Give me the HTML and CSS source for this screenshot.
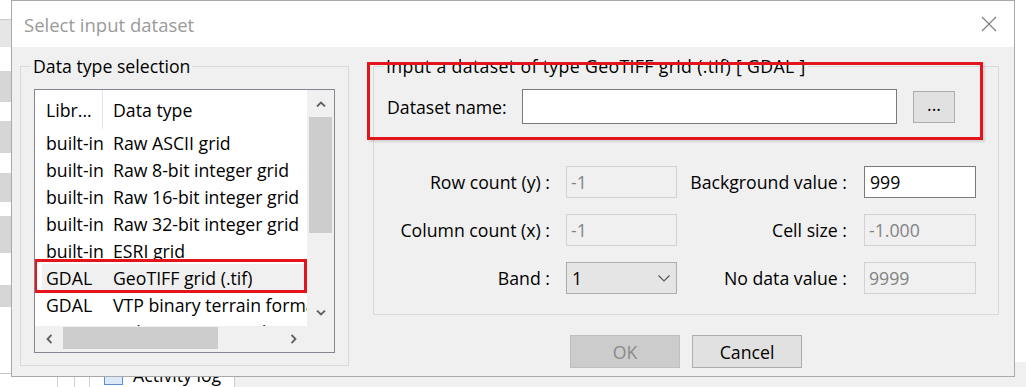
FILE: index.html
```html
<!DOCTYPE html>
<html>
<head>
<meta charset="utf-8">
<title>Select input dataset</title>
<link rel="stylesheet" href="styles.css">
</head>
<body>
<div class="desktop">
  <div class="app">
    <div class="stripes">
      <div class="st w h19"></div>
      <div class="st ln h1"></div>
      <div class="st lg h27"></div>
      <div class="st w h24"></div>
      <div class="st g h31"></div>
      <div class="st w h19"></div>
      <div class="st g h32"></div>
      <div class="st w h20"></div>
      <div class="st g h29"></div>
      <div class="st w h14"></div>
      <div class="st g h37"></div>
      <div class="st w h32"></div>
      <div class="st g h22"></div>
      <div class="st w h66"></div>
      <div class="st ln h1"></div>
      <div class="st w h13"></div>
    </div>
    <div class="app-main"></div>
    <div class="tabbar">
      <div class="tb tb-a"></div>
      <div class="tb tb-b"></div>
      <div class="tb tb-c"></div>
      <div class="tab">
        <svg class="tab-icon" width="19" height="13" viewBox="0 0 19 13"><rect x="0.5" y="0.5" width="18" height="12" fill="#dbe8f7" stroke="#5b8fd0"/><line x1="3" y1="4" x2="16" y2="4" stroke="#5b8fd0"/></svg>
        <span>Activity log</span>
      </div>
      <div class="tb-rest"></div>
    </div>
  </div>

  <div class="dialog">
    <div class="titlebar">
      <span class="title">Select input dataset</span>
      <svg class="close" width="16" height="16" viewBox="0 0 16 16"><path d="M1 1 L15 15 M15 1 L1 15" stroke="#7b7b7b" stroke-width="1.1" fill="none"/></svg>
    </div>
    <div class="dlg-body">
      <fieldset class="group left-group">
        <legend>Data type selection</legend>
        <div class="listbox">
          <div class="list-view">
            <div class="list-head"><div class="c1">Libr...</div><div class="c2">Data type</div></div>
            <div class="row"><div class="c1">built-in</div><div class="c2">Raw ASCII grid</div></div>
            <div class="row"><div class="c1">built-in</div><div class="c2">Raw 8-bit integer grid</div></div>
            <div class="row"><div class="c1">built-in</div><div class="c2">Raw 16-bit integer grid</div></div>
            <div class="row"><div class="c1">built-in</div><div class="c2">Raw 32-bit integer grid</div></div>
            <div class="row"><div class="c1">built-in</div><div class="c2">ESRI grid</div></div>
            <div class="row selected"><div class="c1">GDAL</div><div class="c2">GeoTIFF grid (.tif)</div></div>
            <div class="row"><div class="c1">GDAL</div><div class="c2">VTP binary terrain format</div></div>
            <div class="row"><div class="c1"></div><div class="c2">Erdas Imagine grid (.img)</div></div>
          </div>
          <div class="vscroll">
            <div class="arrow"><svg width="10" height="6" viewBox="0 0 10 6"><polyline points="1,5.5 5,1.5 9,5.5" fill="none" stroke="#606060" stroke-width="1.8"/></svg></div>
            <div class="vthumb"></div>
            <div class="spacer"></div>
            <div class="arrow"><svg width="10" height="6" viewBox="0 0 10 6"><polyline points="1,0.5 5,4.5 9,0.5" fill="none" stroke="#606060" stroke-width="1.8"/></svg></div>
          </div>
          <div class="hscroll">
            <div class="harrow"><svg width="6" height="10" viewBox="0 0 6 10"><polyline points="5.5,1 1.5,5 5.5,9" fill="none" stroke="#606060" stroke-width="1.8"/></svg></div>
            <div class="hthumb"></div>
            <div class="spacer"></div>
            <div class="harrow"><svg width="6" height="10" viewBox="0 0 6 10"><polyline points="0.5,1 4.5,5 0.5,9" fill="none" stroke="#606060" stroke-width="1.8"/></svg></div>
          </div>
          <div class="corner"></div>
        </div>
      </fieldset>

      <div class="right-col">
        <fieldset class="group right-group">
          <legend>Input a dataset of type GeoTIFF grid (.tif) [ GDAL ]</legend>
          <div class="dataset-row">
            <label class="lbl-left">Dataset name:</label>
            <div class="tbox wide"></div>
            <button class="browse">...</button>
          </div>
          <div class="fields">
            <label class="lbl">Row count (y) :</label>
            <div class="tbox disabled">-1</div>
            <label class="lbl lbl2">Background value :</label>
            <div class="tbox">999</div>

            <label class="lbl">Column count (x) :</label>
            <div class="tbox disabled">-1</div>
            <label class="lbl lbl2">Cell size :</label>
            <div class="tbox disabled">-1.000</div>

            <label class="lbl">Band :</label>
            <div class="combo"><span>1</span><svg width="12" height="7" viewBox="0 0 12 7"><polyline points="0.5,0.5 6,6 11.5,0.5" fill="none" stroke="#555" stroke-width="1.1"/></svg></div>
            <label class="lbl lbl2">No data value :</label>
            <div class="tbox disabled">9999</div>
          </div>
        </fieldset>
        <div class="buttons">
          <button class="btn btn-disabled">OK</button>
          <button class="btn">Cancel</button>
        </div>
      </div>

      <div class="mark mark-dataset"></div>
    </div>
  </div>
</div>
</body>
</html>
```

FILE: styles.css
```css
* { box-sizing: border-box; }
html, body { margin: 0; padding: 0; }
body {
  width: 1026px;
  height: 387px;
  overflow: hidden;
  background: #ffffff;
  font-family: "Open Sans", "Noto Sans", sans-serif;
  font-size: 17.7px;
  color: #000;
}

.desktop { position: relative; width: 1026px; height: 387px; }

/* background application */
.app {
  display: grid;
  grid-template-columns: 11px 1fr;
  grid-template-rows: 1fr 25px;
  height: 100%;
}
.stripes { grid-row: 1 / 3; display: flex; flex-direction: column; }
.st.w { background: #ffffff; }
.st.g { background: #d6d6d6; }
.st.lg { background: #e6e6e6; }
.st.ln { background: #c8c8c8; }
.h1 { height: 1px; } .h13 { height: 13px; } .h14 { height: 14px; } .h19 { height: 19px; }
.h20 { height: 20px; } .h22 { height: 22px; } .h24 { height: 24px; } .h27 { height: 27px; }
.h29 { height: 29px; } .h31 { height: 31px; } .h32 { height: 32px; } .h37 { height: 37px; }
.h66 { height: 66px; }
.app-main { background: #fff; }
.tabbar { display: flex; background: #fff; }
.tb { border-right: 1px solid #cfcfcf; background: #fff; }
.tb-a { width: 47px; }
.tb-b { width: 17px; }
.tb-c { width: 15px; }
.tab {
  width: 145px;
  border-right: 1px solid #cfcfcf;
  display: flex;
  align-items: flex-start;
  gap: 10px;
  padding: 3px 0 0 14px;
  line-height: 20px;
}
.tab-icon { margin-top: 7px; }
.tb-rest { flex: 1; background: #f0f0f0; }

/* dialog window */
.dialog {
  position: absolute;
  left: 11px;
  top: 0;
  width: 1004px;
  height: 377px;
  border: 1px solid #a9a9a9;
  background: #f0f0f0;
  display: flex;
  flex-direction: column;
}
.titlebar {
  height: 46px;
  background: #ffffff;
  display: flex;
  align-items: center;
  justify-content: space-between;
  padding: 0 17px 0 12px;
}
.title { font-size: 18.5px; color: #9a9a9a; }

.dlg-body {
  position: relative;
  flex: 1;
  display: grid;
  grid-template-columns: 329px 626px;
  column-gap: 24px;
  align-items: start;
  padding: 9px 0 0 8px;
}

.group {
  margin: 0;
  min-width: 0;
  border: 1px solid #d9d9d9;
}
.group legend {
  padding: 0 2px;
  margin-left: -3px;
  line-height: 20px;
}
.right-group legend { letter-spacing: 0.35px; }
.left-group { padding: 13px 13px 12px 13px; }
.right-group { padding: 13px 13px 20px 13px; }

/* list box */
.listbox {
  height: 264px;
  border: 1px solid #828790;
  display: grid;
  grid-template-columns: 1fr 27px;
  grid-template-rows: 1fr 26px;
  background: #fff;
}
.list-view { overflow: hidden; background: #fff; }
.list-head, .row { display: flex; white-space: nowrap; }
.list-head { height: 39px; align-items: center; }
.row { height: 27px; align-items: center; position: relative; }
.c1 { width: 68px; flex: none; padding-left: 11px; }
.list-head .c1 { border-right: 1px solid #e5e5e5; height: 100%; display: flex; align-items: center; }
.c2 { padding-left: 10px; overflow: hidden; }
.row.selected { background: linear-gradient(to right, #fff 7px, #f0f0f0 7px); }
.row.selected::after {
  content: "";
  position: absolute;
  left: -1px;
  right: 0;
  top: -5px;
  bottom: -2px;
  border: 3px solid #e3141c;
}

.vscroll { background: #f0f0f0; display: flex; flex-direction: column; }
.arrow { height: 27px; display: flex; align-items: center; justify-content: center; }
.vthumb { height: 116px; margin: 0 2px; background: #cdcdcd; }
.spacer { flex: 1; }
.hscroll { background: #f0f0f0; display: flex; }
.harrow { width: 27px; display: flex; align-items: center; justify-content: center; }
.hthumb { width: 155px; margin: 1px 0 3px 1px; background: #cdcdcd; }
.corner { background: #f0f0f0; }

/* right group */
.dataset-row {
  display: grid;
  grid-template-columns: 119px 375px 42px;
  column-gap: 16px;
  align-items: center;
  height: 35px;
}
.lbl-left { white-space: nowrap; }
.tbox {
  height: 32px;
  border: 1px solid #7a7a7a;
  background: #fff;
  padding: 0 5px;
  line-height: 30px;
}
.tbox.wide { height: 35px; }
.tbox.disabled { background: #f0f0f0; border-color: #d2d2d2; color: #838383; padding-left: 4px; }
.browse {
  height: 32px;
  border: 1px solid #adadad;
  background: #e1e1e1;
  font-family: inherit;
  font-size: 17.7px;
  padding: 0 0 6px;
  color: #000;
}
.fields {
  margin-top: 42px;
  display: grid;
  grid-template-columns: 179px 111px 187px 112px;
  grid-auto-rows: 32px;
  row-gap: 16px;
  align-items: center;
}
.lbl { text-align: right; padding-right: 16px; white-space: nowrap; }
.lbl2 { padding-right: 17px; }
.combo {
  height: 32px;
  border: 1px solid #adadad;
  background: #e5e5e5;
  display: flex;
  align-items: center;
  justify-content: space-between;
  padding: 0 6px 0 5px;
}

.buttons {
  margin-top: 20px;
  display: flex;
  justify-content: center;
  gap: 12px;
}
.btn {
  width: 110px;
  height: 33px;
  border: 1px solid #adadad;
  background: #e1e1e1;
  font-family: inherit;
  font-size: 17.7px;
  color: #000;
  padding: 0;
}
.btn-disabled { background: #cccccc; border-color: #bfbfbf; color: #8a8a8a; }

/* annotation overlay */
.mark {
  position: absolute;
  border: 3px solid #e3141c;
  box-shadow: 2px 2px 2px rgba(0,0,0,0.12);
}
.mark-dataset { left: 355px; top: 15px; width: 616px; height: 78px; }
```
